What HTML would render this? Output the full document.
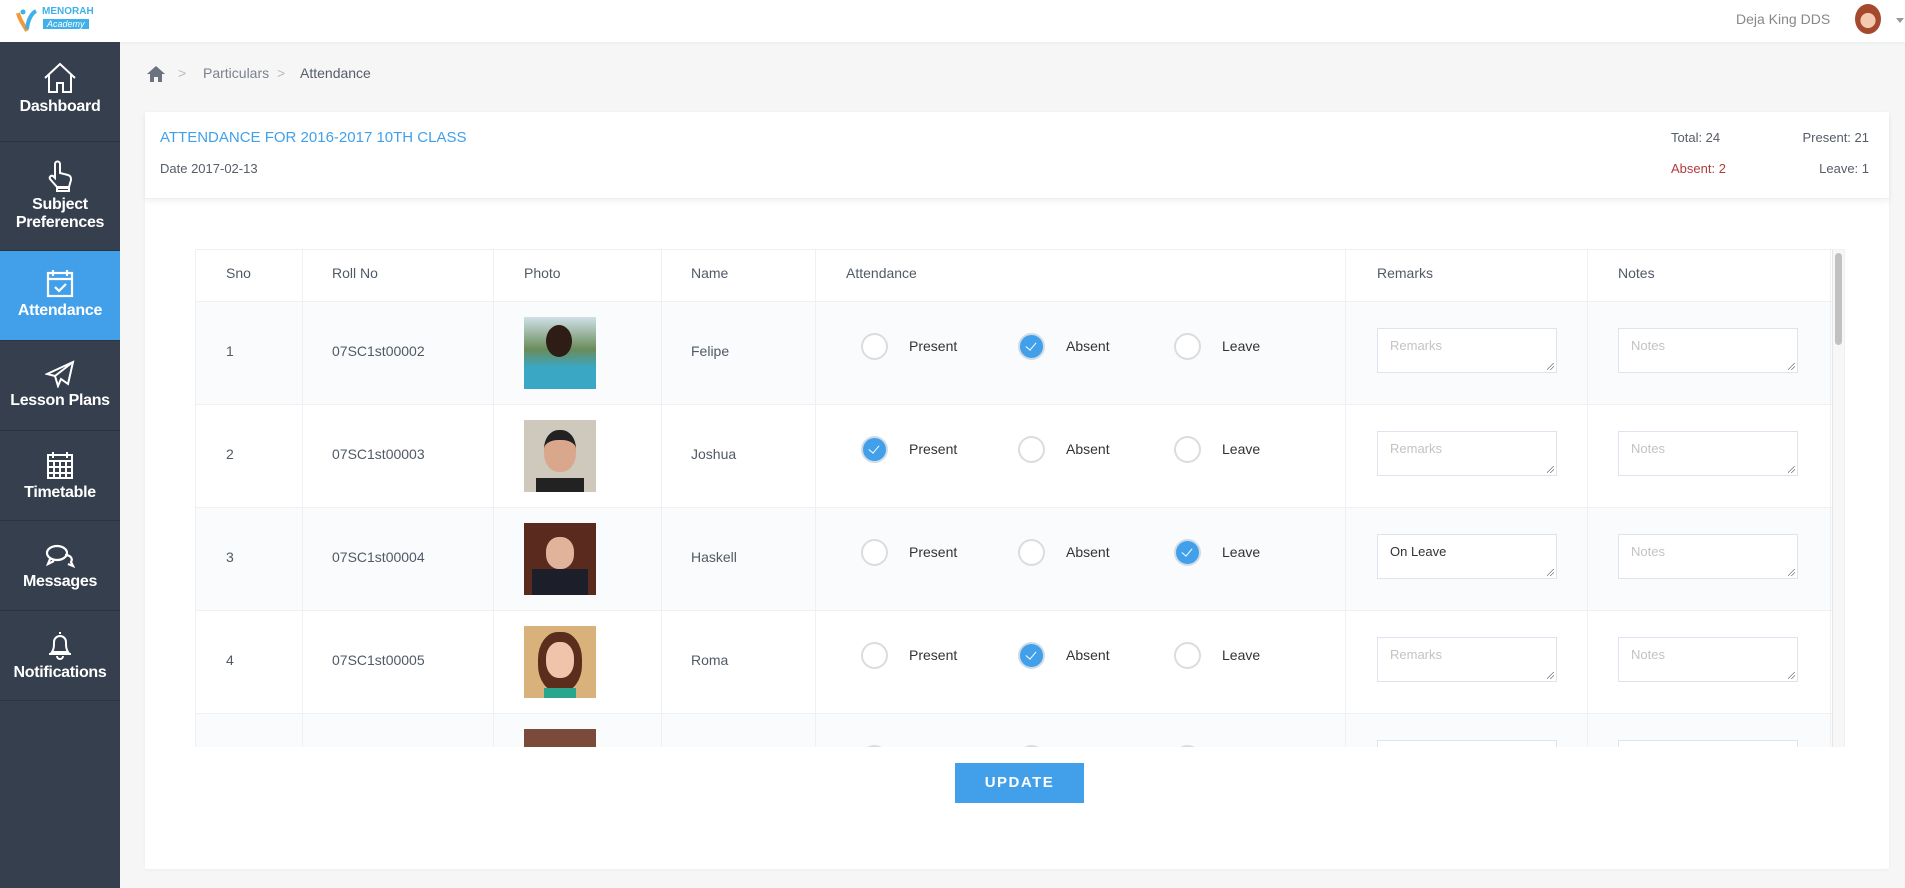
<!DOCTYPE html>
<html><head><meta charset="utf-8">
<style>
*{box-sizing:border-box;margin:0;padding:0}
body{width:1905px;height:888px;overflow:hidden;background:#f6f6f6;font-family:"Liberation Sans",sans-serif;color:#505a66;position:relative}
.abs{position:absolute}
#top{left:0;top:0;width:1905px;height:42px;background:#fff;box-shadow:0 1px 4px rgba(0,0,0,.05)}
#side{left:0;top:42px;width:120px;height:846px;background:#363f4d}
.nav{position:absolute;left:0;width:120px;color:#fff;text-align:center;font-weight:bold;font-size:16px;border-bottom:1px solid #2c3440;letter-spacing:-0.3px}
.nav svg{display:block;margin:0 auto 4px}
.act{background:#42a0ea}
#card{left:145px;top:112px;width:1744px;height:757px;background:#fff;box-shadow:0 1px 4px rgba(0,0,0,.04)}
#chead{left:145px;top:112px;width:1744px;height:87px;border-bottom:1px solid #eee;box-shadow:0 3px 6px rgba(0,0,0,.05)}
.t{position:absolute;white-space:nowrap;font-size:14px}
#tbl{left:195px;top:249px;width:1650px;height:498px;overflow:hidden;border:1px solid #eef0f3;border-bottom:none}
.row{position:absolute;left:0;width:1636px;border-bottom:1px solid #eef0f3}
.vl{position:absolute;top:0;width:1px;height:498px;background:#eef0f3}
.rad{position:absolute;width:27px;height:27px;border-radius:50%;border:2px solid #dcdcdc;background:#fff}
.rad.on{background:#42a0ea;border-color:#d0dbe5}
.rad.on:after{content:"";position:absolute;left:8px;top:5px;width:5px;height:9px;border:solid #fff;border-width:0 1.5px 1.5px 0;transform:rotate(40deg)}
.ta{position:absolute;width:180px;height:45px;border:1px solid #dde3ef;background:#fff;font-size:13px;color:#c3c3c3;padding:9px 12px}
.ta:after{content:"";position:absolute;right:2px;bottom:2px;width:7px;height:7px;background:linear-gradient(135deg,transparent 45%,#777 45%,#777 52%,transparent 52%,transparent 70%,#777 70%,#777 77%,transparent 77%)}
.ph{position:absolute;width:72px;height:72px}
.lbl{font-size:14px;color:#333}
</style></head><body>
<div id="top" class="abs">
  <svg class="abs" style="left:14px;top:7px" width="26" height="26" viewBox="0 0 26 26"><path d="M4 6c2 8 6 12 9 18" stroke="#f29a3a" stroke-width="4" fill="none"/><path d="M22 4c-4 2-8 8-9 18" stroke="#3fb0e8" stroke-width="4" fill="none"/><circle cx="9" cy="5" r="2.5" fill="#3fb0e8"/></svg>
  <div class="t" style="left:42px;top:6px;font-size:10px;font-weight:bold;color:#3fb0e8">MENORAH</div>
  <div class="t" style="left:43px;top:19px;font-size:9px;font-style:italic;color:#fff;background:#3fb0e8;padding:0 4px">Academy</div>
  <div class="t" style="left:1736px;top:11px;font-size:14px;color:#888">Deja King DDS</div>
  <div class="abs" style="left:1855px;top:4px;width:26px;height:30px;border-radius:50%;background:radial-gradient(circle at 50% 55%,#f3c9b0 35%,#a4492d 37%)"></div>
  <div class="abs" style="left:1896px;top:18px;border:4px solid transparent;border-top:5px solid #999"></div>
</div>
<div id="side" class="abs">
  <div class="nav" style="top:0;height:100px;padding-top:20px"><svg width="34" height="32" viewBox="0 0 34 32" fill="none" stroke="#fff" stroke-width="2"><path d="M2 16L17 2l15 14M6 13v17h8v-9h6v9h8V13"/></svg>Dashboard</div>
  <div class="nav" style="top:100px;height:109px;padding-top:18px"><svg width="28" height="32" viewBox="0 0 28 32" fill="none" stroke="#fff" stroke-width="2"><path d="M9 18V4a2.5 2.5 0 015 0v9l8 2c3 1 3 3 3 5l-2 7H11l-7-8c-1-2 1-4 3-3z"/><path d="M11 28h12v3H11z"/></svg>Subject<br>Preferences</div>
  <div class="nav act" style="top:209px;height:90px;padding-top:17px"><svg width="28" height="30" viewBox="0 0 28 30" fill="none" stroke="#fff" stroke-width="2.2"><rect x="2" y="5" width="24" height="23"/><path d="M7 2v6M21 2v6M2 11h24M9 19l4 4 7-7"/></svg>Attendance</div>
  <div class="nav" style="top:299px;height:90px;padding-top:19px"><svg width="30" height="28" viewBox="0 0 30 28" fill="none" stroke="#fff" stroke-width="2"><path d="M28 2L2 14l8 2 3 10 3-7 7 5z M10 16L28 2"/></svg>Lesson Plans</div>
  <div class="nav" style="top:389px;height:90px;padding-top:19px"><svg width="28" height="30" viewBox="0 0 28 30" fill="none" stroke="#fff" stroke-width="2"><rect x="2" y="5" width="24" height="23"/><path d="M7 2v6M21 2v6M2 11h24M2 17h24M2 23h24M8 11v17M14 11v17M20 11v17"/></svg>Timetable</div>
  <div class="nav" style="top:479px;height:90px;padding-top:22px"><svg width="30" height="26" viewBox="0 0 30 26" fill="none" stroke="#fff" stroke-width="2.2"><ellipse cx="12" cy="10" rx="10" ry="7"/><path d="M5 16l-2 5 6-3M20 12c6 0 8 4 6 7l2 4-5-2"/></svg>Messages</div>
  <div class="nav" style="top:569px;height:90px;padding-top:19px"><svg width="26" height="30" viewBox="0 0 26 30" fill="none" stroke="#fff" stroke-width="2"><path d="M13 2v2M5 22c2-3 2-6 2-10a6 6 0 0112 0c0 4 0 7 2 10zM2 24h22M10 26a3 3 0 006 0"/></svg>Notifications</div>
</div>
<svg class="abs" style="left:147px;top:66px" width="18" height="16" viewBox="0 0 18 16"><path d="M9 0L0 8h3v8h4v-5h4v5h4V8h3z" fill="#6b7380"/></svg>
<div class="t" style="left:178px;top:65px;color:#bbb;font-size:14px">&gt;</div>
<div class="t" style="left:203px;top:65px;font-size:14px;color:#7a828c">Particulars</div>
<div class="t" style="left:277px;top:65px;color:#bbb;font-size:14px">&gt;</div>
<div class="t" style="left:300px;top:65px;font-size:14px;color:#555d67">Attendance</div>
<div id="card" class="abs"></div>
<div id="chead" class="abs"></div>
<div class="t" style="left:160px;top:129px;font-size:15px;color:#42a0ea">ATTENDANCE FOR 2016-2017 10TH CLASS</div>
<div class="t" style="left:160px;top:161px;font-size:13px;color:#555d67">Date 2017-02-13</div>
<div class="t" style="left:1671px;top:130px;font-size:13px;color:#555d67">Total: 24</div>
<div class="t" style="left:1792px;top:130px;width:77px;text-align:right;font-size:13px;color:#555d67">Present: 21</div>
<div class="t" style="left:1671px;top:161px;font-size:13px;color:#b23a3a">Absent: 2</div>
<div class="t" style="left:1792px;top:161px;width:77px;text-align:right;font-size:13px;color:#555d67">Leave: 1</div>
<div id="tbl" class="abs">
  <div class="row" style="top:0;height:52px;background:#fff"></div>
  <div class="row" style="top:52px;height:103px;background:#f9fbfd"></div>
  <div class="row" style="top:155px;height:103px;background:#fff"></div>
  <div class="row" style="top:258px;height:103px;background:#f9fbfd"></div>
  <div class="row" style="top:361px;height:103px;background:#fff"></div>
  <div class="row" style="top:464px;height:103px;background:#f9fbfd"></div>
  <div class="vl" style="left:106px"></div><div class="vl" style="left:297px"></div><div class="vl" style="left:465px"></div><div class="vl" style="left:619px"></div><div class="vl" style="left:1149px"></div><div class="vl" style="left:1391px"></div><div class="vl" style="left:1634px"></div>
  <div class="abs" style="left:1636px;top:0;width:14px;height:498px;background:#f7f7f7;border-left:1px solid #e6e6e6"></div>
  <div class="abs" style="left:1639px;top:3px;width:7px;height:92px;border-radius:4px;background:#c1c1c1"></div>
</div>
<div class="t" style="left:226px;top:265px">Sno</div>
<div class="t" style="left:332px;top:265px">Roll No</div>
<div class="t" style="left:524px;top:265px">Photo</div>
<div class="t" style="left:691px;top:265px">Name</div>
<div class="t" style="left:846px;top:265px">Attendance</div>
<div class="t" style="left:1377px;top:265px">Remarks</div>
<div class="t" style="left:1618px;top:265px">Notes</div>
<div class="abs" style="left:0;top:0;width:1905px;height:747px;overflow:hidden">
<div class="t" style="left:226px;top:343px">1</div><div class="t" style="left:332px;top:343px">07SC1st00002</div><div class="t" style="left:691px;top:343px">Felipe</div>
<div class="ph" style="left:524px;top:317px;background:linear-gradient(#cfe0e8 0,#6a8c5a 45%,#3aa7c4 70%,#3aa7c4)"><div class="abs" style="left:22px;top:8px;width:26px;height:32px;border-radius:50%;background:#2d1d16"></div></div>
<div class="rad" style="left:861px;top:333px"></div><div class="t lbl" style="left:909px;top:338px">Present</div>
<div class="rad on" style="left:1018px;top:333px"></div><div class="t lbl" style="left:1066px;top:338px">Absent</div>
<div class="rad" style="left:1174px;top:333px"></div><div class="t lbl" style="left:1222px;top:338px">Leave</div>
<div class="ta" style="left:1377px;top:328px">Remarks</div><div class="ta" style="left:1618px;top:328px">Notes</div>

<div class="t" style="left:226px;top:446px">2</div><div class="t" style="left:332px;top:446px">07SC1st00003</div><div class="t" style="left:691px;top:446px">Joshua</div>
<div class="ph" style="left:524px;top:420px;background:#cfc8bd"><div class="abs" style="left:20px;top:10px;width:32px;height:42px;border-radius:45%;background:#d9a88c;border-top:10px solid #222"></div><div class="abs" style="left:12px;top:58px;width:48px;height:14px;background:#222"></div></div>
<div class="rad on" style="left:861px;top:436px"></div><div class="t lbl" style="left:909px;top:441px">Present</div>
<div class="rad" style="left:1018px;top:436px"></div><div class="t lbl" style="left:1066px;top:441px">Absent</div>
<div class="rad" style="left:1174px;top:436px"></div><div class="t lbl" style="left:1222px;top:441px">Leave</div>
<div class="ta" style="left:1377px;top:431px">Remarks</div><div class="ta" style="left:1618px;top:431px">Notes</div>

<div class="t" style="left:226px;top:549px">3</div><div class="t" style="left:332px;top:549px">07SC1st00004</div><div class="t" style="left:691px;top:549px">Haskell</div>
<div class="ph" style="left:524px;top:523px;background:#5a2a1e"><div class="abs" style="left:22px;top:14px;width:28px;height:32px;border-radius:45%;background:#e0b49a"></div><div class="abs" style="left:8px;top:46px;width:56px;height:26px;background:#1c1f2a"></div></div>
<div class="rad" style="left:861px;top:539px"></div><div class="t lbl" style="left:909px;top:544px">Present</div>
<div class="rad" style="left:1018px;top:539px"></div><div class="t lbl" style="left:1066px;top:544px">Absent</div>
<div class="rad on" style="left:1174px;top:539px"></div><div class="t lbl" style="left:1222px;top:544px">Leave</div>
<div class="ta" style="left:1377px;top:534px;color:#333">On Leave</div><div class="ta" style="left:1618px;top:534px">Notes</div>

<div class="t" style="left:226px;top:652px">4</div><div class="t" style="left:332px;top:652px">07SC1st00005</div><div class="t" style="left:691px;top:652px">Roma</div>
<div class="ph" style="left:524px;top:626px;background:#d8b27a"><div class="abs" style="left:14px;top:6px;width:44px;height:60px;border-radius:45%;background:#5a2e1c"></div><div class="abs" style="left:22px;top:16px;width:28px;height:36px;border-radius:45%;background:#f0c4aa"></div><div class="abs" style="left:20px;top:62px;width:32px;height:10px;background:#2aa58e"></div></div>
<div class="rad" style="left:861px;top:642px"></div><div class="t lbl" style="left:909px;top:647px">Present</div>
<div class="rad on" style="left:1018px;top:642px"></div><div class="t lbl" style="left:1066px;top:647px">Absent</div>
<div class="rad" style="left:1174px;top:642px"></div><div class="t lbl" style="left:1222px;top:647px">Leave</div>
<div class="ta" style="left:1377px;top:637px">Remarks</div><div class="ta" style="left:1618px;top:637px">Notes</div>

<div class="ph" style="left:524px;top:729px;background:#7a4a3a"></div>
<div class="rad" style="left:861px;top:745px"></div><div class="rad" style="left:1018px;top:745px"></div><div class="rad" style="left:1174px;top:745px"></div>
<div class="ta" style="left:1377px;top:740px"></div><div class="ta" style="left:1618px;top:740px"></div>
</div>
<div class="abs" style="left:955px;top:763px;width:129px;height:40px;background:#42a0ea;color:#fff;font-weight:bold;font-size:15px;letter-spacing:1.5px;text-align:center;line-height:40px">UPDATE</div>
</body></html>
